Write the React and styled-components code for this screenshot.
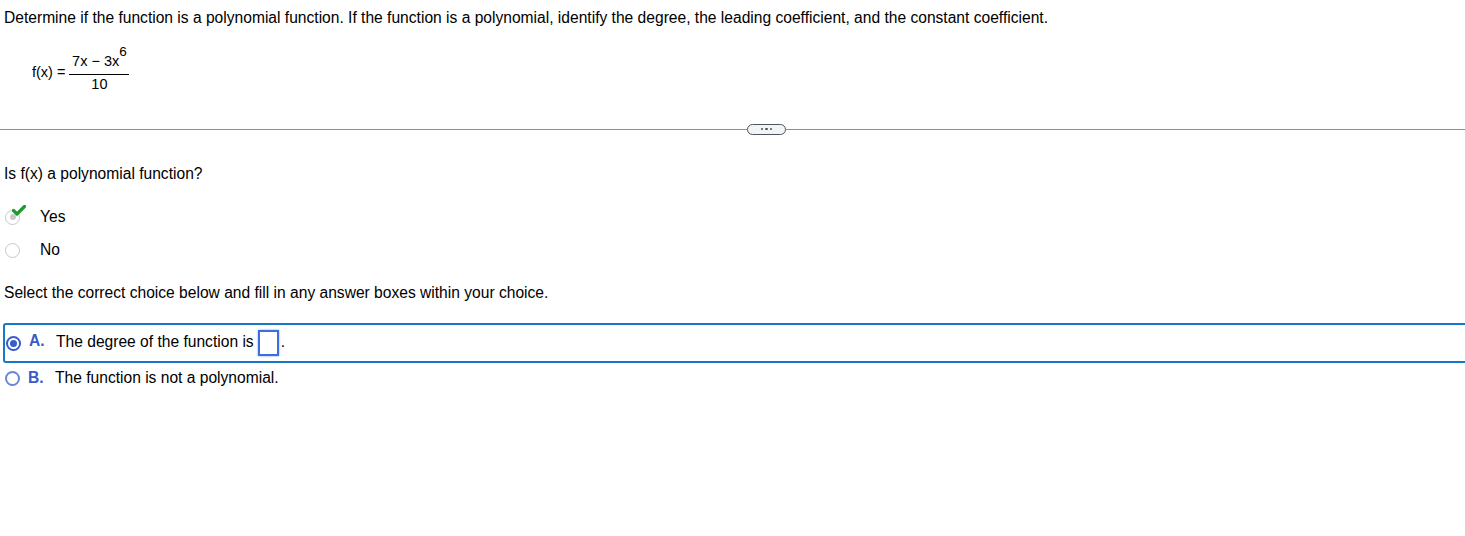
import React from "react";
import styled, { createGlobalStyle } from "styled-components";

const Global = createGlobalStyle`
  html, body { margin: 0; padding: 0; background: #fff; }
  body { font-family: "Liberation Sans", Arial, sans-serif; color: #000; }
`;

const Page = styled.div`
  width: 1465px;
  height: 536px;
  overflow: hidden;
  font-size: 15.6px;
`;

const Top = styled.div`
  padding: 9px 0 0 4px;
`;

const Line = styled.div`
  line-height: 18px;
  margin: ${(p) => p.$m || "0"};
`;

const Formula = styled.div`
  display: flex;
  align-items: center;
  margin: 25px 0 0 28px;
  font-size: 14.5px;
`;

const Fraction = styled.span`
  display: inline-flex;
  flex-direction: column;
  align-items: center;
  margin-left: 4px;
`;

const Num = styled.span`
  padding: 0 2px 5px;
`;

const Den = styled.span`
  border-top: 1px solid #000;
  padding: 1px 0 0;
  width: 60px;
  text-align: center;
`;

const Sup = styled.sup`
  font-size: 13.5px;
  vertical-align: 10px;
  line-height: 0;
`;

const DividerRow = styled.div`
  display: flex;
  align-items: center;
  margin-top: 31px;
  height: 12px;
`;

const Rule = styled.div`
  flex: ${(p) => (p.$w ? `0 0 ${p.$w}px` : "1")};
  height: 1px;
  background: #8a8f96;
`;

const Pill = styled.div`
  width: 37px;
  height: 9px;
  border: 1px solid #4a5560;
  border-radius: 6px;
  background: #f2f4f6;
  display: flex;
  align-items: center;
  justify-content: center;
  gap: 2px;
`;

const Dot = styled.span`
  width: 2.5px;
  height: 2.5px;
  border-radius: 50%;
  background: #4a5560;
`;

const Body = styled.div`
  padding-left: 4px;
`;

const Option = styled.div`
  display: flex;
  align-items: center;
  height: 18px;
  margin: ${(p) => p.$m};
`;

const Radio = styled.span`
  width: 15px;
  height: 15px;
  border-radius: 50%;
  border: ${(p) => (p.$w ? `${p.$w}px` : "1px")} solid ${(p) => p.$c || "#c8c8c8"};
  box-sizing: border-box;
  display: inline-flex;
  align-items: center;
  justify-content: center;
  position: relative;
  flex: none;
`;

const Inner = styled.span`
  width: ${(p) => p.$s || 7}px;
  height: ${(p) => p.$s || 7}px;
  border-radius: 50%;
  background: ${(p) => p.$c};
`;

const Check = styled.svg`
  position: absolute;
  left: 6px;
  top: -6px;
`;

const OptLabel = styled.span`
  margin-left: 20px;
`;

const Choices = styled.div`
  margin-top: 21px;
`;

const Choice = styled.div`
  display: flex;
  align-items: center;
  height: ${(p) => (p.$sel ? "36px" : "18px")};
  border: ${(p) => (p.$sel ? "2px solid #1878c8" : "none")};
  border-right: none;
  border-radius: ${(p) => (p.$sel ? "3px 0 0 3px" : "0")};
  margin: ${(p) => p.$m || "0"};
  padding-left: ${(p) => (p.$sel ? "1px" : "3px")};
`;

const Letter = styled.span`
  color: #3a5cc7;
  font-weight: bold;
  margin-left: 8px;
  width: 27px;
  position: relative;
  top: ${(p) => (p.$sel ? "-2px" : "0")};
`;

const Box = styled.span`
  display: inline-block;
  width: 17px;
  height: 22px;
  border: 2px solid #3a6fe0;
  box-shadow: 0 0 2px #7aa0f0;
  margin: 0 2px 0 4px;
  vertical-align: middle;
  background: #fff;
`;

export default function App() {
  return (
    <Page>
      <Global />
      <Top>
        <Line>
          Determine if the function is a polynomial function. If the function is a polynomial, identify the degree, the leading coefficient, and the constant coefficient.
        </Line>
        <Formula>
          <span>f(x) =</span>
          <Fraction>
            <Num>
              7x − 3x<Sup>6</Sup>
            </Num>
            <Den>10</Den>
          </Fraction>
        </Formula>
      </Top>
      <DividerRow>
        <Rule />
        <Pill>
          <Dot />
          <Dot />
          <Dot />
        </Pill>
        <Rule $w={679} />
      </DividerRow>
      <Body>
        <Line $m="30px 0 0 0">Is f(x) a polynomial function?</Line>
        <Option $m="25px 0 0 1px">
          <Radio>
            <Inner $c="#c8c8c8" $s={6} />
            <Check width="14" height="11" viewBox="0 0 14 11">
              <path d="M1.5 5.5 L5 9 L12.5 1.5" fill="none" stroke="#1e9a2e" strokeWidth="3.2" strokeLinecap="round" strokeLinejoin="round" />
            </Check>
          </Radio>
          <OptLabel>Yes</OptLabel>
        </Option>
        <Option $m="15px 0 0 1px">
          <Radio />
          <OptLabel>No</OptLabel>
        </Option>
        <Line $m="25px 0 0 0">
          Select the correct choice below and fill in any answer boxes within your choice.
        </Line>
      </Body>
      <Choices>
        <Choice $sel $m="0 0 0 3px">
          <Radio $c="#3a5cc7" $w={2}>
            <Inner $c="#3a5cc7" />
          </Radio>
          <Letter $sel>A.</Letter>
          <span>
            The degree of the function is
            <Box />.
          </span>
        </Choice>
        <Choice $m="6px 0 0 2px">
          <Radio $c="#6a86d8" $w={2} />
          <Letter>B.</Letter>
          <span>The function is not a polynomial.</span>
        </Choice>
      </Choices>
    </Page>
  );
}
